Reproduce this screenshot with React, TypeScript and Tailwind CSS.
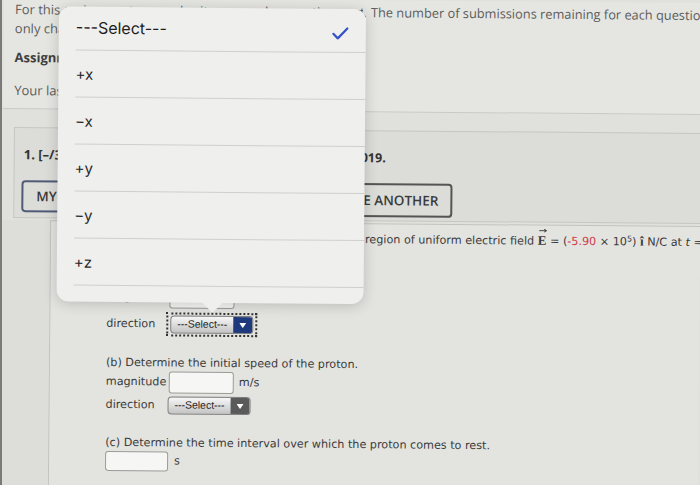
import React from "react";

function Select({ dark }: { dark?: boolean }) {
  return (
    <div className="flex h-[18px] w-[83px] overflow-hidden rounded-[4px] border border-[#7d7d7d] bg-gradient-to-b from-[#f7f7f7] to-[#c4c4c4]">
      <div className="flex flex-1 items-center justify-center font-['Liberation_Sans',sans-serif] text-[10.5px] text-[#2a2a2a]">
        ---Select---
      </div>
      <div
        className={
          dark
            ? "flex w-[19px] items-center justify-center bg-[#1e3a7c]"
            : "flex w-[19px] items-center justify-center bg-[#5a5a5a]"
        }
      >
        <svg width="7" height="5" viewBox="0 0 7 5">
          <polygon points="0,0 7,0 3.5,5" fill="#ffffff" />
        </svg>
      </div>
    </div>
  );
}

function Input({ w, h }: { w: string; h: string }) {
  return <div className={`${w} ${h} shrink-0 rounded-[3px] border border-[#9b9b99] bg-[#f6f6f4]`} />;
}

const items = ["+x", "\u2212x", "+y", "\u2212y", "+z"];

export default function App() {
  return (
    <div className="relative h-[485px] w-[700px] overflow-hidden border-l-2 border-[#7a7a78] bg-[#e0e1dd]">
      <div className="relative h-[485px] w-[698px] rotate-[0.5deg] font-['Open_Sans',sans-serif]">
        {/* top notice */}
        <div className="h-[112px] border-b border-[#c9cac6] bg-[#e5e6e2] pl-[11px] pt-[3px] text-[13px] leading-[19px] text-[#5c5c5c]">
          <div className="flex whitespace-nowrap">
            <span className="w-[348px] shrink-0 overflow-hidden">For this assignment, you submit answers by question parts</span>
            <span className="w-[8px] shrink-0">.</span>
            <span className="text-[12.8px]">The number of submissions remaining for each question part</span>
          </div>
          <div>only changes if you submit or change the answer.</div>
          <div className="mt-[10px] font-bold text-[#3f3f3f]">Assignment Scoring</div>
          <div className="mt-[14px]">Your last submission is used for your score.</div>
        </div>

        {/* question card header */}
        <div className="ml-[11px] mr-[-20px] mt-[18px] h-[91px] border border-[#c6c7c3] bg-[#dcddd9] pt-[17px]">
          <div className="flex w-[371px] items-baseline justify-between pl-[9px] font-bold leading-[18px] text-[#333333]">
            <span className="text-[13px]">1. [–/3 Points]</span>
            <span className="text-[12.5px]">SERPSE10 23.4.OP.019.</span>
          </div>
          <div className="mt-[16px] flex gap-[8px] pl-[7px] text-[13.5px] font-semibold text-[#3a3a3a]">
            <div className="flex h-[32px] w-[110px] items-center rounded-[4px] border-2 border-[#4f5b77] pl-[13px]">MY NOTES</div>
            <div className="flex h-[32px] w-[144px] items-center justify-center rounded-[4px] border-2 border-[#555555]">ASK YOUR TEACHER</div>
            <div className="flex h-[34px] w-[161px] items-center justify-end rounded-[4px] border-2 border-[#555555] pr-[12px]">PRACTICE ANOTHER</div>
          </div>
        </div>

        {/* body */}
        <div className="flex h-[300px] pt-[2px]">
          <div className="w-[48px] shrink-0 bg-[#dddeda]" />
          <div className="min-w-0 flex-1 overflow-hidden border-l border-t border-[#c2c3bf] bg-[#e3e4e0] pl-[56px] pt-[6px] font-['DejaVu_Sans',sans-serif] text-[11.2px] text-[#3a3a3a]">
            <div className="flex whitespace-nowrap leading-[17px]">
              <span className="w-[258px] shrink-0 overflow-hidden">A proton moves in the +x direction into a</span>
              <span>
                region of uniform electric field{" "}
                <span className="relative inline-block font-['Liberation_Serif',serif] text-[13px] font-bold">
                  E
                  <svg className="absolute left-[1px] top-[-3px]" width="8" height="4" viewBox="0 0 8 4">
                    <path d="M0 2 H7 M5 0.5 L7.5 2 L5 3.5" stroke="#333" strokeWidth="0.9" fill="none" />
                  </svg>
                </span>{" "}
                = (<span className="text-[#d03a4a]">-5.90</span> × 10<sup className="text-[8px]">5</sup>){" "}
                <span className="font-['Liberation_Serif',serif] text-[13px] font-bold">î</span> N/C at <i>t</i> = 0.
              </span>
            </div>
            <div className="leading-[17px]">= 0. It comes to rest later.</div>
            <div className="mt-[6px] leading-[17px]">(a) Find the acceleration.</div>
            <div className="flex h-[22px] items-center">
              <span className="w-[63px] shrink-0">magnitude</span>
              <Input w="w-[65px]" h="h-[22px]" />
              <span className="ml-[5px]">m/s²</span>
            </div>
            <div className="mt-[4px] flex h-[24px] items-center">
              <span className="w-[60px] shrink-0">direction</span>
              <div className="flex h-[24px] w-[91px] items-center justify-center border-2 border-dotted border-[#333333]">
                <Select dark />
              </div>
            </div>
            <div className="mt-[18px] leading-[17px]">(b) Determine the initial speed of the proton.</div>
            <div className="flex h-[22px] items-center">
              <span className="w-[63px] shrink-0">magnitude</span>
              <Input w="w-[65px]" h="h-[22px]" />
              <span className="ml-[5px]">m/s</span>
            </div>
            <div className="mt-[2px] flex h-[20px] items-center">
              <span className="w-[62px] shrink-0">direction</span>
              <Select />
            </div>
            <div className="mt-[20px] leading-[16px]">(c) Determine the time interval over which the proton comes to rest.</div>
            <div className="flex h-[20px] items-center">
              <Input w="w-[63px]" h="h-[20px]" />
              <span className="ml-[6px]">s</span>
            </div>
          </div>
        </div>

        {/* popover */}
        <div className="absolute left-[55px] top-[9px] h-[295px] w-[307px] rounded-[12px] bg-[#efefed] shadow-[0_2px_14px_rgba(0,0,0,0.18)] font-['Inter',sans-serif]">
          <div className="ml-[17px] flex h-[44px] items-center justify-between border-b border-[#cfcfcd] pb-[2px] pr-[17px]">
            <span className="text-[16px] text-[#1e1e1e]">---Select---</span>
            <svg className="translate-y-[4px]" width="17" height="13" viewBox="0 0 17 13">
              <path d="M1.5 7 L6 11.5 L15.5 1.5" stroke="#3451c6" strokeWidth="2.2" fill="none" strokeLinecap="round" strokeLinejoin="round" />
            </svg>
          </div>
          {items.map((t) => (
            <div key={t} className="ml-[17px] flex h-[47px] items-center border-b border-[#cfcfcd] pt-[3px] text-[15px] text-[#2a2a2a]">
              {t}
            </div>
          ))}
        </div>
        <svg className="absolute left-[200px] top-[303px]" width="22" height="11" viewBox="0 0 22 11">
          <polygon points="0,0 22,0 11,11" fill="#efefed" />
        </svg>
      </div>
    </div>
  );
}
